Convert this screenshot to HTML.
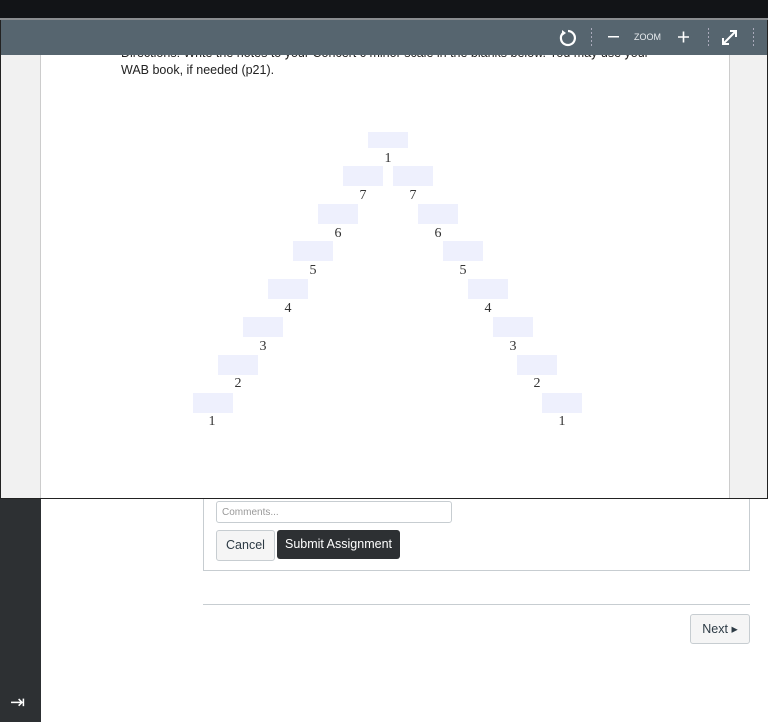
<!DOCTYPE html>
<html><head><style>
body{margin:0;width:768px;height:722px;position:relative;overflow:hidden;background:#fff;font-family:"Liberation Sans",sans-serif}
.abs{position:absolute}
.box{position:absolute;width:40px;height:20px;background:#eef0fd}
.lbl{position:absolute;width:40px;text-align:center;font-family:"Liberation Serif",serif;font-size:14px;color:#333}
</style></head><body>
<div class="abs" style="left:0;top:0;width:41px;height:722px;background:#2d3033"></div>
<div class="abs" style="left:10px;top:692px;color:#fff;font-size:18px">⇥</div>
<div class="abs" style="left:203px;top:470px;width:545px;height:100px;border:1px solid #c7cdd1;border-top:none"></div>
<div class="abs" style="left:216px;top:501px;width:236px;height:22px;border:1px solid #c7cdd1;border-radius:3px;font-size:10px;color:#999;line-height:22px;padding-left:5px;box-sizing:border-box">Comments...</div>
<div class="abs" style="left:216px;top:530px;width:57px;height:29px;border:1px solid #c7cdd1;border-radius:3px;background:#f5f5f5;font-size:12.5px;color:#2d3b45;line-height:29px;text-align:center">Cancel</div>
<div class="abs" style="left:277px;top:530px;width:123px;height:29px;border-radius:3px;background:#2d3033;font-size:12.5px;color:#fff;line-height:29px;text-align:center">Submit Assignment</div>
<div class="abs" style="left:203px;top:604px;width:547px;height:1px;background:#c7cdd1"></div>
<div class="abs" style="left:690px;top:614px;width:58px;height:28px;border:1px solid #c7cdd1;border-radius:3px;background:#f5f5f5;font-size:12.5px;color:#2d3b45;line-height:28px;text-align:center">Next ▸</div>

<div class="abs" style="left:0;top:0;width:766px;height:497px;border:1px solid #222;background:#f1f1f1"></div>
<div class="abs" style="left:40px;top:55px;width:688px;height:443px;background:#fff;border-left:1px solid #ccc;border-right:1px solid #ccc;overflow:hidden">
<div class="abs" style="left:80px;top:-10px;font-size:12.5px;color:#222;line-height:17px;width:560px">Directions: Write the notes to your Concert c minor scale in the blanks below. You may use your<br>WAB book, if needed (p21).</div>
</div>
<svg class="abs" style="left:0;top:0" width="768" height="56">
<rect x="0" y="0" width="768" height="18" fill="#121417"/>
<rect x="0" y="18" width="768" height="2" fill="#8a8d90"/>
<rect x="1" y="20" width="766" height="35" fill="#56656f"/>
<path d="M563 33 A7 7 0 1 0 568 31" fill="none" stroke="#ffffff" stroke-width="2.2"/>
<path d="M562 30 L566 33 L562 36Z" fill="#ffffff"/>
<line x1="591.5" y1="28" x2="591.5" y2="46" stroke="#aab" stroke-dasharray="2,2"/>
<rect x="608" y="36" width="11" height="1.5" fill="#ffffff"/>
<text x="634" y="40" font-size="9" fill="#e8ecef" font-family="Liberation Sans">ZOOM</text>
<path d="M678 37 H689 M683.5 31.5 V42.5" stroke="#ffffff" stroke-width="1.6"/>
<line x1="708.5" y1="28" x2="708.5" y2="46" stroke="#aab" stroke-dasharray="2,2"/>
<path d="M723 44 L736 31 M730 31 H736 V37 M723 38 V44 H729" fill="none" stroke="#ffffff" stroke-width="2"/>
<line x1="753.5" y1="28" x2="753.5" y2="46" stroke="#aab" stroke-dasharray="2,2"/>
</svg>

<div class="box" style="left:368px;top:132px;height:16px"></div><div class="lbl" style="left:368px;top:151px">1</div>
<div class="box" style="left:343px;top:166px"></div><div class="lbl" style="left:343px;top:188px">7</div>
<div class="box" style="left:393px;top:166px"></div><div class="lbl" style="left:393px;top:188px">7</div>
<div class="box" style="left:318px;top:204px"></div><div class="lbl" style="left:318px;top:226px">6</div>
<div class="box" style="left:418px;top:204px"></div><div class="lbl" style="left:418px;top:226px">6</div>
<div class="box" style="left:293px;top:241px"></div><div class="lbl" style="left:293px;top:263px">5</div>
<div class="box" style="left:443px;top:241px"></div><div class="lbl" style="left:443px;top:263px">5</div>
<div class="box" style="left:268px;top:279px"></div><div class="lbl" style="left:268px;top:301px">4</div>
<div class="box" style="left:468px;top:279px"></div><div class="lbl" style="left:468px;top:301px">4</div>
<div class="box" style="left:243px;top:317px"></div><div class="lbl" style="left:243px;top:339px">3</div>
<div class="box" style="left:493px;top:317px"></div><div class="lbl" style="left:493px;top:339px">3</div>
<div class="box" style="left:218px;top:355px"></div><div class="lbl" style="left:218px;top:376px">2</div>
<div class="box" style="left:517px;top:355px"></div><div class="lbl" style="left:517px;top:376px">2</div>
<div class="box" style="left:193px;top:393px"></div><div class="lbl" style="left:192px;top:414px">1</div>
<div class="box" style="left:542px;top:393px"></div><div class="lbl" style="left:542px;top:414px">1</div>
</body></html>
